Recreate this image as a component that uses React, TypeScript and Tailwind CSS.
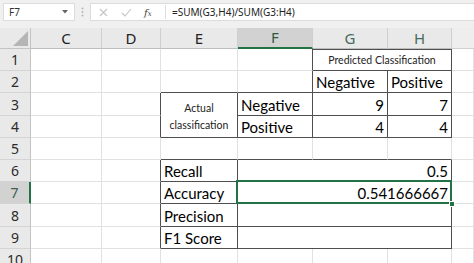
import React from "react";

const cellFont = { fontFamily: "Lato, 'Noto Sans', sans-serif" };
const uiFont = { fontFamily: "'Noto Sans', 'Open Sans', sans-serif" };

type B = "g" | "d";

function Cell({
  r = "g",
  b = "g",
  small = false,
  className = "",
  children,
}: {
  r?: B;
  b?: B;
  small?: boolean;
  className?: string;
  children?: React.ReactNode;
}) {
  const rc = r === "d" ? "border-r-[#4f4f4f]" : "border-r-[#e1e1e1]";
  const bc = b === "d" ? "border-b-[#4f4f4f]" : "border-b-[#e1e1e1]";
  const sz = small
    ? "text-[10.5px] leading-[15px] text-[#222]"
    : "text-[15px] leading-[20px] text-black";
  return (
    <div className={`border-r border-b ${rc} ${bc} flex px-[3px] whitespace-nowrap ${sz} ${className}`} style={cellFont}>
      {children}
    </div>
  );
}

function RowHead({ n, sel = false }: { n: string; sel?: boolean }) {
  return (
    <div
      className={`flex items-center justify-center border-b border-b-[#d4d4d4] text-[14px] ${
        sel
          ? "bg-[#d2d2d2] border-r-2 border-r-[#217346] text-[#3f5f4f]"
          : "bg-[#e9e9e9] border-r border-r-[#c4c4c4] text-[#2b2b2b]"
      }`}
      style={uiFont}
    >
      {n}
    </div>
  );
}

export default function App() {
  const colHeads: { l: string; w: string; sel?: boolean; tc?: string }[] = [
    { l: "C", w: "w-[71px]" },
    { l: "D", w: "w-[59px]" },
    { l: "E", w: "w-[77px]" },
    { l: "F", w: "w-[75px]", sel: true },
    { l: "G", w: "w-[75px]", tc: "text-[#476b5b]" },
    { l: "H", w: "w-[64px]", tc: "text-[#476b5b]" },
  ];

  return (
    <div className="w-[474px] h-[263px] overflow-hidden bg-white relative">
      {/* formula bar */}
      <div className="h-[28px] bg-[#f0f0f0] flex items-start pt-[3px] pl-[3px]" style={uiFont}>
        <div className="w-[72px] h-[18px] bg-white border border-[#dcdcdc] flex items-center pl-[5px] pr-[6px] text-[10px] text-[#333]">
          <span className="flex-1">F7</span>
          <svg width="6" height="4" viewBox="0 0 6 4">
            <polygon points="0,0 6,0 3,3.5" fill="#666" />
          </svg>
        </div>
        <div className="w-[15px] h-[18px] flex items-center justify-center">
          <svg width="3" height="10" viewBox="0 0 3 10">
            <circle cx="1.5" cy="1.5" r="1" fill="#b8b8b8" />
            <circle cx="1.5" cy="5" r="1" fill="#b8b8b8" />
            <circle cx="1.5" cy="8.5" r="1" fill="#b8b8b8" />
          </svg>
        </div>
        <div className="flex-1 h-[18px] bg-white border border-r-0 border-[#dcdcdc] flex items-center">
          <div className="w-[74px] h-full flex items-center">
            <svg className="ml-[8px]" width="9" height="9" viewBox="0 0 9 9">
              <path d="M1 1 L8 8 M8 1 L1 8" stroke="#c4c4c4" strokeWidth="1.1" />
            </svg>
            <svg className="ml-[13px]" width="11" height="9" viewBox="0 0 11 9">
              <path d="M1 5 L4 8 L10 1" stroke="#c4c4c4" strokeWidth="1.1" fill="none" />
            </svg>
            <span className="ml-[12px] text-[10px] italic text-[#444]" style={{ fontFamily: "'DejaVu Serif', serif" }}>
              f<span className="text-[7px]">x</span>
            </span>
          </div>
          <div className="w-px h-[14px] bg-[#dcdcdc]" />
          <span className="ml-[6px] text-[10px] text-[#222]">=SUM(G3,H4)/SUM(G3:H4)</span>
        </div>
      </div>

      {/* column header row */}
      <div className="h-[21px] flex" style={uiFont}>
        <div className="w-[31px] h-full bg-[#e9e9e9] border-r border-b border-[#c4c4c4] flex items-end justify-end pr-[2px] pb-[2px]">
          <svg width="15" height="15" viewBox="0 0 15 15">
            <polygon points="15,0 15,15 0,15" fill="#b5b5b5" />
          </svg>
        </div>
        {colHeads.map((c) => (
          <div
            key={c.l}
            className={`${c.w} h-full flex items-center justify-center text-[15px] border-r border-r-[#cfcfcf] ${
              c.sel
                ? "bg-[#d2d2d2] border-b-2 border-b-[#217346] text-[#2e5a43]"
                : `bg-[#e9e9e9] border-b border-b-[#bdbdbd] ${c.tc ?? "text-[#222]"}`
            }`}
          >
            {c.l}
          </div>
        ))}
        <div className="flex-1 h-full bg-[#eeeeee] border-b border-b-[#d0d0d0]" />
      </div>

      {/* grid */}
      <div className="grid grid-cols-[31px_71px_59px_77px_75px_75px_64px_22px] grid-rows-[22px_22px_23px_22px_22px_22px_22px_23px_22px_22px]">
        {/* row 1 */}
        <RowHead n="1" />
        <Cell />
        <Cell />
        <Cell />
        <Cell r="d" />
        <Cell r="d" b="d" small className="col-span-2 justify-center items-center border-t border-t-[#4f4f4f]">
          Predicted Classification
        </Cell>
        <Cell />
        {/* row 2 */}
        <RowHead n="2" />
        <Cell />
        <Cell />
        <Cell b="d" />
        <Cell r="d" b="d" />
        <Cell r="d" b="d" className="items-end">Negative</Cell>
        <Cell r="d" b="d" className="items-end">Positive</Cell>
        <Cell />
        {/* row 3 */}
        <RowHead n="3" />
        <Cell />
        <Cell r="d" />
        <Cell r="d" b="d" small className="row-span-2 flex-col items-center justify-center leading-[17px] pt-[3px]">
          <span>Actual</span>
          <span>classification</span>
        </Cell>
        <Cell r="d" b="d" className="items-end">Negative</Cell>
        <Cell r="d" b="d" className="items-end justify-end">9</Cell>
        <Cell r="d" b="d" className="items-end justify-end">7</Cell>
        <Cell />
        {/* row 4 */}
        <RowHead n="4" />
        <Cell />
        <Cell r="d" />
        <Cell r="d" b="d" className="items-end">Positive</Cell>
        <Cell r="d" b="d" className="items-end justify-end">4</Cell>
        <Cell r="d" b="d" className="items-end justify-end">4</Cell>
        <Cell />
        {/* row 5 */}
        <RowHead n="5" />
        <Cell />
        <Cell />
        <Cell b="d" />
        <Cell b="d" />
        <Cell b="d" />
        <Cell b="d" />
        <Cell />
        {/* row 6 */}
        <RowHead n="6" />
        <Cell />
        <Cell r="d" />
        <Cell r="d" b="d" className="items-end">Recall</Cell>
        <Cell r="d" b="d" className="col-span-3 items-end justify-end">0.5</Cell>
        <Cell />
        {/* row 7 */}
        <RowHead n="7" sel />
        <Cell />
        <Cell r="d" />
        <Cell r="d" b="d" className="items-end">Accuracy</Cell>
        <Cell r="d" b="d" className="col-span-3 items-end justify-end relative">
          0.541666667
          <div className="absolute -left-[2px] -top-[2px] -right-px -bottom-px border-2 border-[#217346] z-10 pointer-events-none" />
          <div className="absolute -right-[4px] -bottom-[4px] w-[6px] h-[6px] bg-[#217346] border border-white z-20" />
        </Cell>
        <Cell />
        {/* row 8 */}
        <RowHead n="8" />
        <Cell />
        <Cell r="d" />
        <Cell r="d" b="d" className="items-end">Precision</Cell>
        <Cell r="d" b="d" className="col-span-3" />
        <Cell />
        {/* row 9 */}
        <RowHead n="9" />
        <Cell />
        <Cell r="d" />
        <Cell r="d" b="d" className="items-end">F1 Score</Cell>
        <Cell r="d" b="d" className="col-span-3" />
        <Cell />
        {/* row 10 */}
        <RowHead n="10" />
        <Cell />
        <Cell />
        <Cell />
        <Cell />
        <Cell />
        <Cell />
        <Cell />
      </div>
    </div>
  );
}
